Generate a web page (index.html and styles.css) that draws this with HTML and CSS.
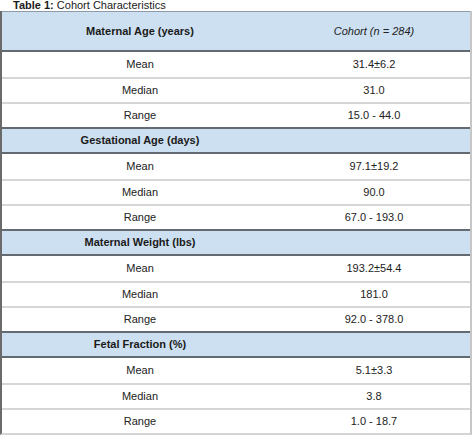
FILE: index.html
```html
<!DOCTYPE html>
<html>
<head>
<meta charset="utf-8">
<link rel="stylesheet" href="styles.css">
</head>
<body>
<div class="caption"><b>Table 1:</b> Cohort Characteristics</div>
<div class="table">
  <div class="row head head-main"><div class="cell bold">Maternal Age (years)</div><div class="cell italic">Cohort (n = 284)</div></div>
  <div class="row first"><div class="cell">Mean</div><div class="cell">31.4±6.2</div></div>
  <div class="row"><div class="cell">Median</div><div class="cell">31.0</div></div>
  <div class="row"><div class="cell">Range</div><div class="cell">15.0 - 44.0</div></div>

  <div class="row head"><div class="cell bold">Gestational Age (days)</div><div class="cell"></div></div>
  <div class="row first"><div class="cell">Mean</div><div class="cell">97.1±19.2</div></div>
  <div class="row"><div class="cell">Median</div><div class="cell">90.0</div></div>
  <div class="row"><div class="cell">Range</div><div class="cell">67.0 - 193.0</div></div>

  <div class="row head"><div class="cell bold">Maternal Weight (lbs)</div><div class="cell"></div></div>
  <div class="row first"><div class="cell">Mean</div><div class="cell">193.2±54.4</div></div>
  <div class="row"><div class="cell">Median</div><div class="cell">181.0</div></div>
  <div class="row"><div class="cell">Range</div><div class="cell">92.0 - 378.0</div></div>

  <div class="row head"><div class="cell bold">Fetal Fraction (%)</div><div class="cell"></div></div>
  <div class="row first"><div class="cell">Mean</div><div class="cell">5.1±3.3</div></div>
  <div class="row"><div class="cell">Median</div><div class="cell">3.8</div></div>
  <div class="row"><div class="cell">Range</div><div class="cell">1.0 - 18.7</div></div>
</div>
</body>
</html>
```

FILE: styles.css
```css
html, body {
  margin: 0;
  padding: 0;
  background: #ffffff;
}
body {
  font-family: "Liberation Sans", Arial, sans-serif;
  font-size: 11px;
  color: #222222;
  width: 474px;
  height: 436px;
  overflow: hidden;
}
.caption {
  height: 11px;
  line-height: 11px;
  padding-left: 13px;
  color: #1a1a1a;
  white-space: nowrap;
}
.caption b {
  font-weight: bold;
}
.table {
  width: 472px;
  box-sizing: border-box;
  border-left: 2px solid #6a6a6a;
  border-right: 2px solid #c6c6c6;
  border-bottom: 2px solid #d4d4d4;
}
.row {
  display: grid;
  grid-template-columns: 276px 1fr;
  align-items: center;
  box-sizing: border-box;
  height: 25px;
  border-top: 2px solid #d6d6d6;
}
.row.first {
  border-top: none;
}
.head {
  height: 27px;
  background: #cde0f1;
  border-top: 2px solid #646a72;
  border-bottom: 2px solid #646a72;
}
.head-main {
  height: 41px;
  border-top: 1px solid #8e9aa7;
}
.cell {
  text-align: center;
  white-space: nowrap;
  line-height: 13px;
}
.bold {
  font-weight: bold;
  color: #1a1a1a;
}
.italic {
  font-style: italic;
}
```
